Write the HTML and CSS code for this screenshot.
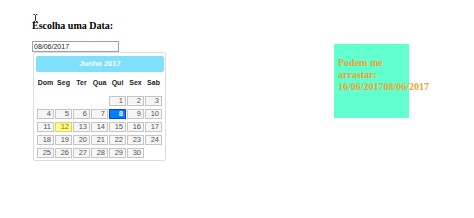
FILE: index.html
```html
<!DOCTYPE html>
<html lang="pt-BR">
<head>
    <meta charset="UTF-8">
    <title>Datepicker</title>
    <link rel="stylesheet" href="styles.css">
</head>
<body>
    <div class="page">
        <svg class="cursor" width="5" height="8" viewBox="0 0 5 8">
            <path d="M0.5 0.5h1.5M3 0.5h1.5M2.5 1v6M0.5 7.5h1.5M3 7.5h1.5" stroke="#333" stroke-width="1" fill="none"/>
        </svg>

        <h3 class="title">Escolha uma Data:</h3>
        <input type="text" class="date-input" value="08/06/2017">

        <div class="datepicker">
            <div class="dp-header">Junho 2017</div>
            <div class="dp-grid">
                <span class="dp-name">Dom</span>
                <span class="dp-name">Seg</span>
                <span class="dp-name">Ter</span>
                <span class="dp-name">Qua</span>
                <span class="dp-name">Qui</span>
                <span class="dp-name">Sex</span>
                <span class="dp-name">Sab</span>

                <span></span><span></span><span></span><span></span>
                <span class="day">1</span>
                <span class="day">2</span>
                <span class="day">3</span>

                <span class="day">4</span>
                <span class="day">5</span>
                <span class="day">6</span>
                <span class="day">7</span>
                <span class="day active">8</span>
                <span class="day">9</span>
                <span class="day">10</span>

                <span class="day">11</span>
                <span class="day today">12</span>
                <span class="day">13</span>
                <span class="day">14</span>
                <span class="day">15</span>
                <span class="day">16</span>
                <span class="day">17</span>

                <span class="day">18</span>
                <span class="day">19</span>
                <span class="day">20</span>
                <span class="day">21</span>
                <span class="day">22</span>
                <span class="day">23</span>
                <span class="day">24</span>

                <span class="day">25</span>
                <span class="day">26</span>
                <span class="day">27</span>
                <span class="day">28</span>
                <span class="day">29</span>
                <span class="day">30</span>
            </div>
        </div>

        <div class="drag-box">Podem me arrastar: 16/06/201708/06/2017</div>
    </div>
</body>
</html>
```

FILE: styles.css
```css
body {
    margin: 0;
    background-color: #fff;
}
.page {
    position: relative;
    width: 474px;
    height: 218px;
    padding: 20px 0 0 32px;
    box-sizing: border-box;
}
.cursor {
    position: absolute;
    left: 33px;
    top: 14px;
}
.title {
    margin: 0;
    font-family: "Liberation Serif", serif;
    font-size: 10px;
    line-height: 12px;
    font-weight: bold;
    color: #000;
}
.date-input {
    display: block;
    margin: 9px 0 0 0;
    width: 87px;
    height: 11px;
    padding: 0 1px;
    box-sizing: border-box;
    border: 1px solid #8ea3c4;
    font-family: "Liberation Sans", Arial, sans-serif;
    font-size: 7px;
    line-height: 9px;
    color: #222;
    outline: none;
}
.datepicker {
    margin-left: 1px;
    width: 133px;
    padding: 3px 1px 2px 1px;
    box-sizing: border-box;
    border: 1px solid #dddddd;
    border-radius: 2px;
    background-color: #fff;
    font-family: "Liberation Sans", Arial, sans-serif;
    font-size: 7px;
}
.dp-header {
    height: 16px;
    line-height: 16px;
    margin-left: 1px;
    background-color: #7fe0fb;
    color: #fff;
    font-weight: bold;
    font-size: 7.5px;
    text-align: center;
    border-radius: 2px;
}
.dp-grid {
    display: grid;
    grid-template-columns: repeat(7, 17px);
    grid-auto-rows: 10px;
    grid-template-rows: 21px;
    column-gap: 1px;
    row-gap: 3px;
    margin: 0 0 0 2px;
}
.dp-name {
    font-weight: bold;
    color: #222;
    text-align: center;
    line-height: 21px;
    margin-bottom: -3px;
}
.day {
    box-sizing: border-box;
    border: 1px solid #c5c5c5;
    background-color: #f6f6f6;
    color: #555;
    text-align: right;
    padding-right: 2px;
    font-size: 7.5px;
    line-height: 8px;
}
.day.active {
    background-color: #007fff;
    border-color: #003eff;
    color: #fff;
    font-weight: bold;
}
.day.today {
    background-color: #fffa90;
    border-color: #dad55e;
    color: #777620;
}
.drag-box {
    position: absolute;
    left: 334px;
    top: 44px;
    width: 75px;
    height: 74px;
    box-sizing: border-box;
    padding: 13px 0 0 4px;
    background-color: #62ffcf;
    color: #eea232;
    font-family: "Liberation Serif", serif;
    font-size: 10px;
    line-height: 12px;
    font-weight: bold;
}
```
